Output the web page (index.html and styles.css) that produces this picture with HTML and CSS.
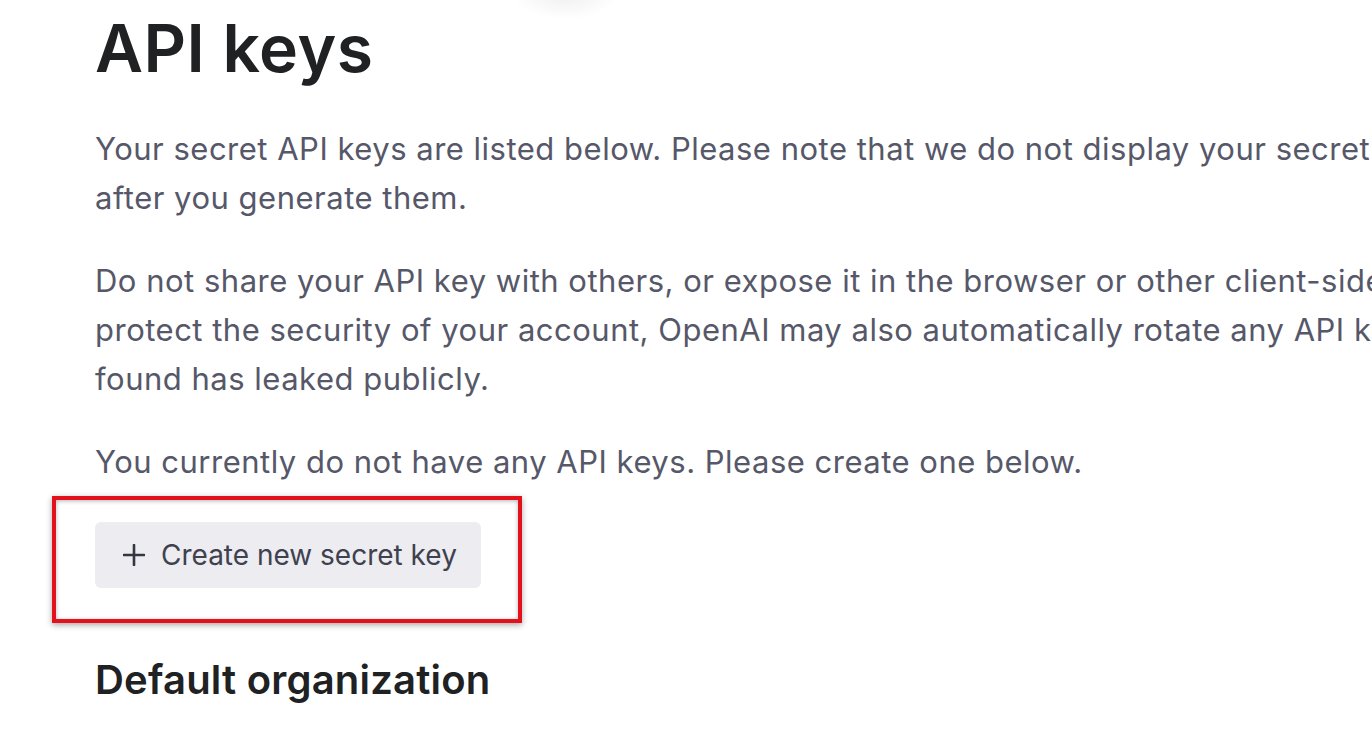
FILE: index.html
```html
<!DOCTYPE html>
<html lang="en">
<head>
    <meta charset="UTF-8">
    <title>API keys</title>
    <link rel="stylesheet" href="styles.css">
</head>
<body>
    <div class="cursor-shadow"></div>
    <div class="page">
        <h1 class="page-title">API keys</h1>
        <p class="note">Your secret API keys are listed below. Please note that we do not display your secret API keys again<br>after you generate them.</p>
        <p class="note">Do not share your API key with others, or expose it in the browser or other client-side code. In order to<br>protect the security of your account, OpenAI may also automatically rotate any API key that we've<br>found has leaked publicly.</p>
        <p class="note">You currently do not have any API keys. Please create one below.</p>
        <div class="highlight">
            <button class="create-button" type="button">
                <svg class="plus-icon" viewBox="0 0 22 22" width="22" height="22">
                    <path d="M11 1v20M1 11h20" stroke="currentColor" stroke-width="2.6" stroke-linecap="round" fill="none"/>
                </svg>
                Create new secret key
            </button>
        </div>
        <h2 class="section-title">Default organization</h2>
    </div>
</body>
</html>
```

FILE: styles.css
```css
html, body {
    margin: 0;
    padding: 0;
    overflow: hidden;
    background-color: #ffffff;
}
body {
    font-family: "Inter", "Liberation Sans", sans-serif;
    color: #353740;
    position: relative;
    height: 740px;
}
.cursor-shadow {
    position: absolute;
    left: 510px;
    top: -40px;
    width: 110px;
    height: 60px;
    border-radius: 50%;
    background: radial-gradient(ellipse at center, rgba(0, 0, 0, 0.07) 0%, rgba(0, 0, 0, 0) 70%);
}
.page {
    padding-left: 95px;
    padding-top: 12px;
    white-space: nowrap;
}
.page-title {
    font-size: 66px;
    font-weight: 600;
    color: #202123;
    margin: 0 0 40px;
    line-height: 72px;
    letter-spacing: 0.5px;
}
.note {
    font-size: 31px;
    line-height: 49px;
    letter-spacing: 0.5px;
    color: #565869;
    margin: 0 0 34px;
}
.highlight {
    display: inline-block;
    margin-left: -43px;
    margin-top: -24px;
    padding: 22px 37px 31px 39px;
    border: 4px solid #e3111b;
    box-shadow: 0 2px 6px rgba(0, 0, 0, 0.35), inset 0 1px 4px rgba(0, 0, 0, 0.3);
}
.create-button {
    display: flex;
    align-items: center;
    gap: 16px;
    height: 66px;
    padding: 0 24px 0 28px;
    border: none;
    border-radius: 6px;
    background-color: #ececf1;
    color: #40414f;
    font-family: "Inter", "Liberation Sans", sans-serif;
    font-size: 28px;
    cursor: pointer;
}
.plus-icon {
    color: #353740;
}
.section-title {
    font-size: 40px;
    font-weight: 600;
    letter-spacing: 0.2px;
    color: #202123;
    margin: 32px 0 0;
}
```
